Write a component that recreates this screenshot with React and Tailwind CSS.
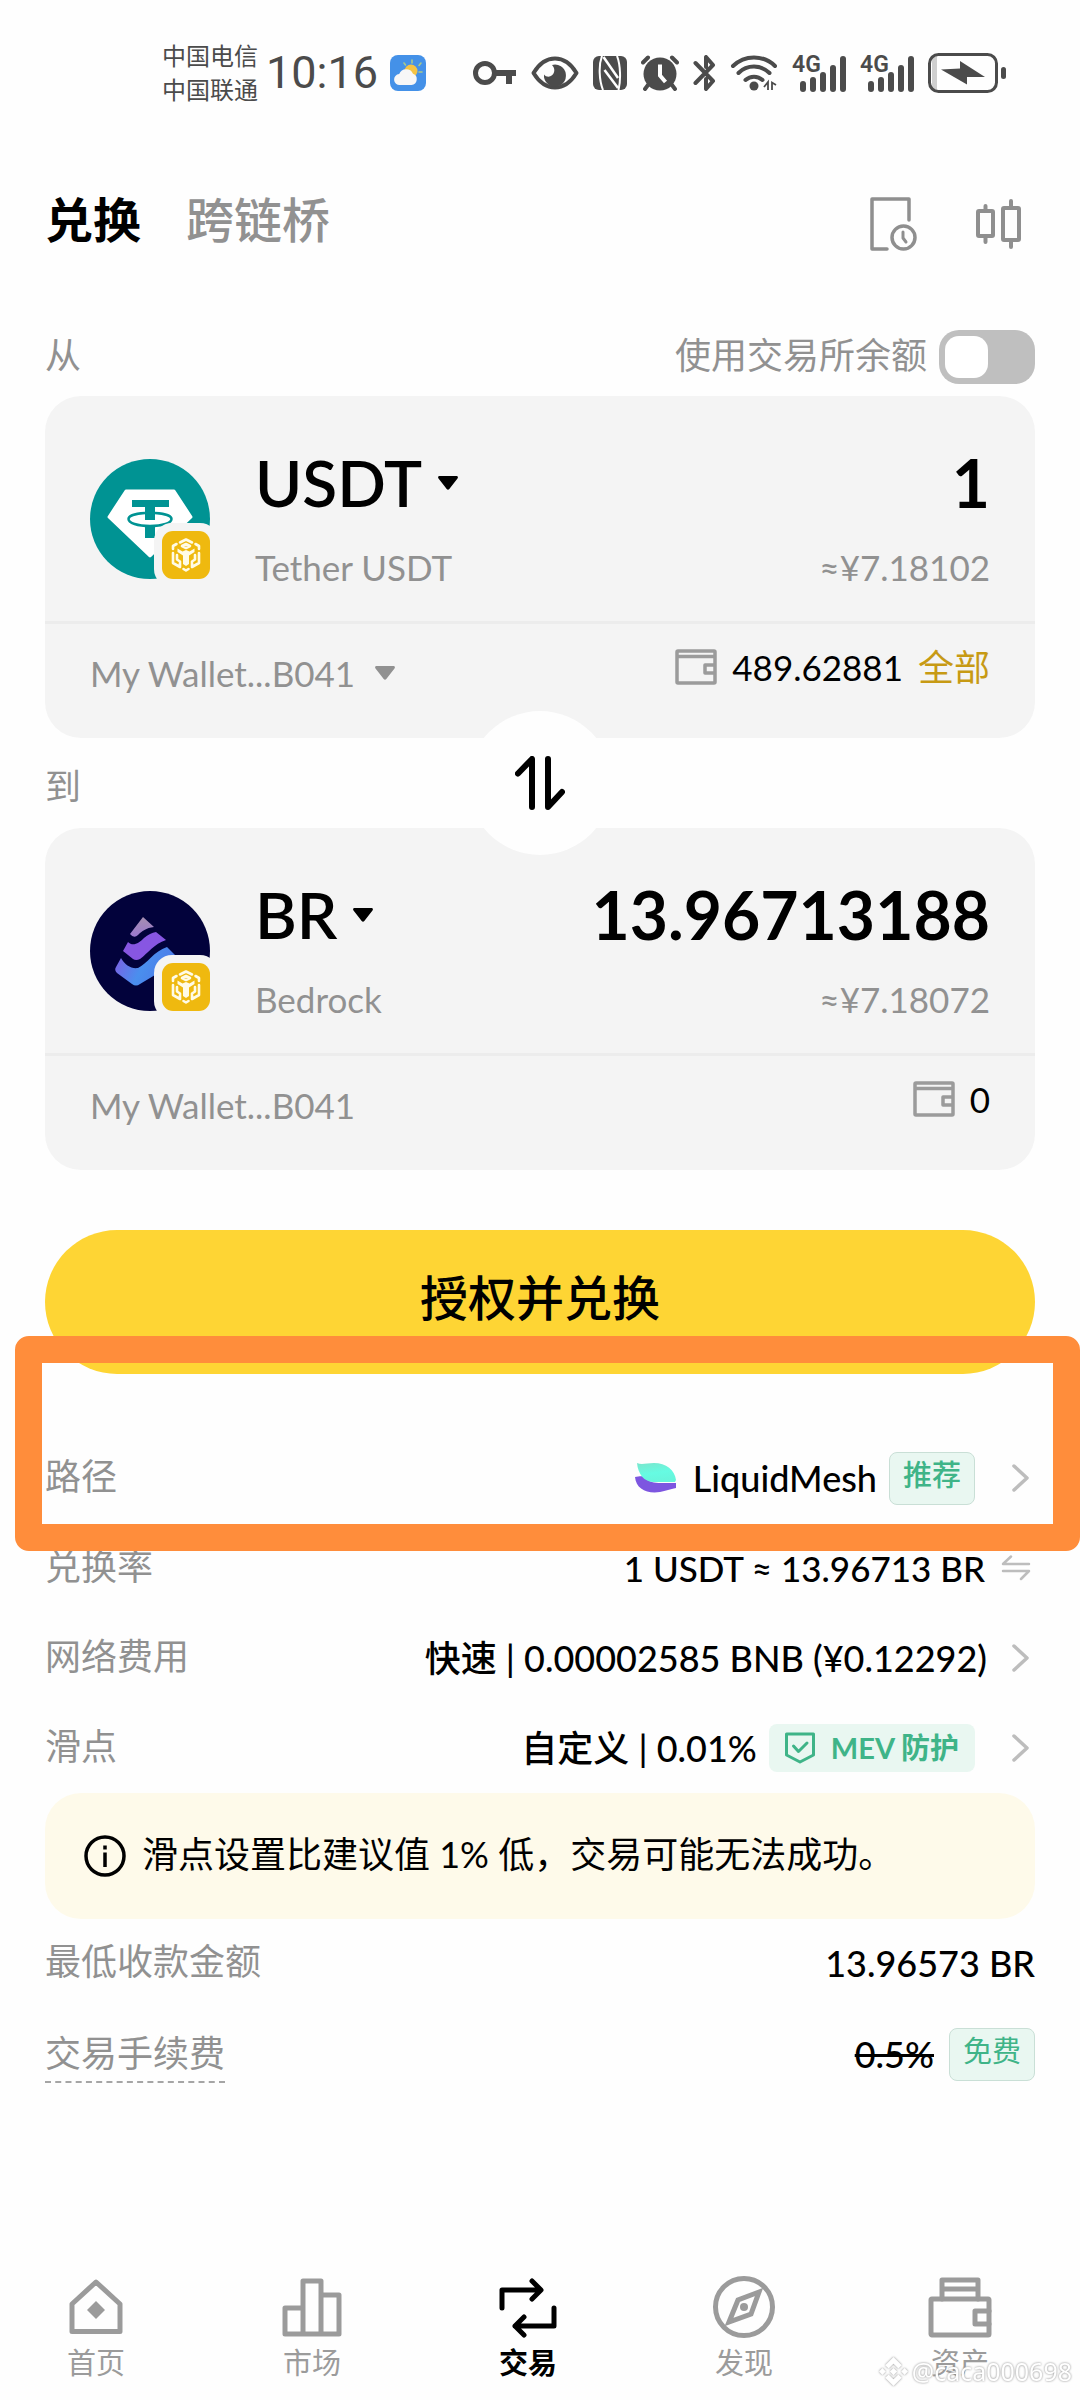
import React from "react";

const INK = "#4b4b4b";
const GRAY = "#9b9b9b";

/* ---------- status bar icons ---------- */

function WeatherIcon() {
  return (
    <svg width="36" height="36" viewBox="0 0 36 36" className="ml-3 shrink-0">
      <rect width="36" height="36" rx="8" fill="#4491e8" />
      <g stroke="#a9c98a" strokeWidth="1.6" strokeLinecap="round">
        <path d="M22 5v3M14 8l1.500 2M31 8l-2 2.500M29 17h3" />
      </g>
      <circle cx="21" cy="16" r="6.500" fill="#f4c445" />
      <path d="M10 30a5.500 5.500 0 0 1-.8-11 7.500 7.500 0 0 1 13.800-.2A5.800 5.800 0 0 1 21.500 30Z" fill="#f7f7f7" />
    </svg>
  );
}

function KeyIcon() {
  return (
    <svg width="44" height="26" viewBox="0 0 44 26" fill="none" stroke={INK}>
      <circle cx="12" cy="13" r="9.500" strokeWidth="5" />
      <path d="M22 13h21" strokeWidth="6" />
      <path d="M36 13v11" strokeWidth="6" />
    </svg>
  );
}

function EyeIcon() {
  return (
    <svg width="48" height="34" viewBox="0 0 48 34">
      <path d="M2.500 17C8 8 15 2.500 24 2.500S40 8 45.500 17C40 26 33 31.500 24 31.500S8 26 2.500 17Z" fill="none" stroke={INK} strokeWidth="4" strokeLinejoin="round" />
      <path d="M21 9a11 11 0 1 1-8 9.500c2 2.500 5.500 3 8 .8 3.200-2.800 3-7.500 0-10.300Z" fill={INK} />
    </svg>
  );
}

function NfcIcon() {
  return (
    <svg width="34" height="34" viewBox="0 0 34 34">
      <rect width="34" height="34" rx="6" fill={INK} />
      <g fill="none" stroke="#fff" strokeWidth="2">
        <path d="M9 0C5.500 9 6 24 10 34" />
        <path d="M24 0c3.500 9 4 24 1.500 34" />
        <path d="M10.500 1 25 22" strokeWidth="2.500" />
        <path d="M11.500 14 25 32" strokeWidth="2.500" />
      </g>
    </svg>
  );
}

function AlarmIcon() {
  return (
    <svg width="38" height="36" viewBox="1 0 38 36" fill="none" stroke={INK} strokeLinecap="round">
      <circle cx="20" cy="19" r="16.500" fill={INK} stroke="none" />
      <path d="M3 7.500 8 2.500M37 7.500 32 2.500M8 30l-3 4M32 30l3 4" strokeWidth="4" />
      <path d="M20 9.500v11l5.500 6.500" stroke="#fff" strokeWidth="4" strokeLinecap="butt" />
    </svg>
  );
}

function BluetoothIcon() {
  return (
    <svg width="23" height="36" viewBox="0 0 23 36" fill="none" stroke={INK} strokeWidth="4" strokeLinejoin="round" strokeLinecap="round">
      <path d="M2.500 8 20 26l-7 8V24M2.500 28 20 10l-7-8v10" />
    </svg>
  );
}

function WifiIcon() {
  return (
    <svg width="48" height="36" viewBox="0 0 48 36" fill="none" stroke={INK} strokeWidth="4" strokeLinecap="round">
      <path d="M3 11a30 30 0 0 1 42 0" />
      <path d="M8.500 18a22 22 0 0 1 31 0" />
      <path d="M15.500 25a12.500 12.500 0 0 1 17 0" />
      <circle cx="24" cy="31" r="4.500" fill={INK} stroke="none" />
      <path d="m34 32 4-5v8M42 35v-7.500l4 2.500" strokeWidth="1.800" strokeLinecap="butt" />
    </svg>
  );
}

function SignalIcon() {
  return (
    <div className="relative">
      <span className="absolute -top-1 left-0 font-['Roboto',sans-serif] text-[23px] leading-[28px] font-semibold">4G</span>
      <svg width="54" height="37" viewBox="0 0 54 37" fill={INK} className="block">
        <rect x="8" y="26" width="6" height="11" rx="3" />
        <rect x="18" y="22" width="6" height="15" rx="3" />
        <rect x="28" y="17" width="6" height="20" rx="3" />
        <rect x="38" y="10" width="6" height="27" rx="3" />
        <rect x="48" y="1" width="6" height="36" rx="3" />
      </svg>
    </div>
  );
}

function BatteryIcon() {
  return (
    <svg width="78" height="40" viewBox="0 0 78 40">
      <path d="M4 8a6 6 0 0 1 5-5v34a6 6 0 0 1-5-5Z" fill="#cfcfcf" />
      <rect x="1.500" y="1.500" width="67" height="37" rx="9" fill="none" stroke={INK} strokeWidth="3" />
      <path d="M13 16.500 32 15.500V8l25 16H39v7.500Z" fill={INK} />
      <rect x="73" y="14" width="5" height="12" rx="2.500" fill={INK} />
    </svg>
  );
}

/* ---------- interface icons ---------- */

function HistoryIcon() {
  return (
    <svg width="48" height="54" viewBox="0 0 48 54" fill="none" stroke="#8f8f8f" strokeWidth="3.500" strokeLinecap="round" strokeLinejoin="round">
      <path d="M39 23V2H2v50h15" />
      <circle cx="33.500" cy="40.500" r="11.500" />
      <path d="M33 35v6l3 4" strokeWidth="3" />
    </svg>
  );
}

function CandlesIcon() {
  return (
    <svg width="48" height="50" viewBox="0 0 48 50" fill="none" stroke="#8f8f8f" strokeWidth="4" strokeLinecap="round" strokeLinejoin="round">
      <rect x="3" y="12" width="15" height="25" rx="1" />
      <path d="M10.500 7v5M10.500 37v6" />
      <rect x="28" y="9" width="16" height="32" rx="1" />
      <path d="M36 2v7M36 41v7" />
    </svg>
  );
}

function Caret({ className }) {
  return (
    <svg width="20" height="14" viewBox="0 0 20 14" className={className} fill="currentColor">
      <path d="M1.500 0h17c1.300 0 1.900 1.400 1 2.400l-8.200 10.700c-.7.900-1.900.9-2.600 0L.5 2.400C-.4 1.400.2 0 1.500 0Z" />
    </svg>
  );
}

function WalletIcon() {
  return (
    <svg width="42" height="36" viewBox="0 0 42 36" fill="none" stroke={GRAY} strokeWidth="3.500" strokeLinejoin="round">
      <rect x="2" y="2" width="38" height="32" rx="1" />
      <path d="M2 7.500h38M39 16h-9v8h9" />
    </svg>
  );
}

function Chevron() {
  return (
    <svg width="18" height="28" viewBox="0 0 18 28" fill="none" stroke="#bdbdbd" strokeWidth="3.500" strokeLinecap="round" strokeLinejoin="round">
      <path d="m3 2 13 12L3 26" />
    </svg>
  );
}

function ChainBadge() {
  return (
    <span className="absolute -right-2 -bottom-2 rounded-[18px] bg-[#f4f4f4] p-2">
      <svg width="48" height="48" viewBox="0 0 48 48" className="block">
        <rect width="48" height="48" rx="11" fill="#efb90f" />
        <g fill="none" stroke="#fffbe6" strokeWidth="2.600" strokeLinejoin="round" strokeLinecap="round">
          <path d="M11 18v-3l3.500-2M18 11.500l6-3 6 3M33.500 13l3.500 2v3" />
          <path d="m20 15 4-2 4 2-4 2Z" />
          <path d="M11 22v10l7 4v-5.500l-3-2V24M37 22v10l-7 4v-5.500l3-2V24" />
          <path d="m21.500 38 2.500 1.500 2.500-1.500" />
        </g>
        <path d="m15.500 17.500 5 3 3.500-1.500 3.500 1.500 5-3V21l-5.500 3.500V33L24 35l-3-2v-8.500L15.500 21Z" fill="#fffbe6" />
      </svg>
    </span>
  );
}

function TetherLogo() {
  return (
    <svg width="120" height="120" viewBox="0 0 120 120">
      <circle cx="60" cy="60" r="60" fill="#009393" />
      <path d="M36 32h48l17 26-41 39L19 58Z" fill="#fff" stroke="#fff" strokeWidth="3" strokeLinejoin="round" />
      <g fill="#009393">
        <path d="M42 41h37v7H65v13H55V48H42Z" />
        <path d="M55 66h10v13H55Z" />
      </g>
      <path d="M55 54c-10 .6-16.500 3-16.500 6 0 4 9 7 21.500 7s21.500-3 21.500-7c0-3-6.500-5.400-16.500-6" fill="none" stroke="#009393" strokeWidth="2.500" />
    </svg>
  );
}

function BedrockLogo() {
  return (
    <svg width="120" height="120" viewBox="0 0 120 120">
      <defs>
        <linearGradient id="rock-top" x1="0" y1="0" x2="0" y2="1">
          <stop offset="0" stopColor="#a58fb0" />
          <stop offset="1" stopColor="#9a78cf" />
        </linearGradient>
        <linearGradient id="rock-base" x1="0" y1="0" x2="1" y2="0.300">
          <stop offset="0" stopColor="#8458e2" />
          <stop offset="0.550" stopColor="#4a8fee" />
          <stop offset="1" stopColor="#4c7be8" />
        </linearGradient>
      </defs>
      <circle cx="60" cy="60" r="60" fill="#02023b" />
      <path d="M53 26 64 36c-8 1-12 4-16 8q-4 4-8-1Z" fill="url(#rock-top)" />
      <path d="m66 41 10 8c-12 4-18 13-26 19q-4 2-7 0L33 60l5-9c5 5 11 1 16-4q6-5 12-6Z" fill="#8756e2" />
      <path d="m77 56 8 8v8L50 93q-4 3-8 0L27 82q-3-3-1-6l5-9c4 7 10 11 17 10C57 73 64 60 77 56Z" fill="url(#rock-base)" />
    </svg>
  );
}

function LiquidMeshLogo() {
  return (
    <svg width="42" height="32" viewBox="0 0 42 32">
      <defs>
        <linearGradient id="mesh-top" x1="0" y1="0" x2="0.300" y2="1">
          <stop offset="0" stopColor="#7be6cd" />
          <stop offset="0.600" stopColor="#66fbe2" />
          <stop offset="1" stopColor="#68f5dc" />
        </linearGradient>
      </defs>
      <path d="M0 15c4 0 7-2 10 1 4 4 9 5 16 5h15v5c-6 1-10 3-16 4C12 32 1 27 0 15Z" fill="#7d56e0" />
      <path d="M2 1c5 2 9 0 17 0 12 0 21 7 22 17l-1 2H19C9 20 3 12 2 1Z" fill="url(#mesh-top)" />
    </svg>
  );
}

function ShieldIcon() {
  return (
    <svg width="30" height="32" viewBox="0 0 30 32" fill="none" stroke="#3fb488" strokeWidth="3" strokeLinejoin="round" strokeLinecap="round">
      <path d="M1.500 2h27v21L15 30 1.500 23Z" />
      <path d="m8.500 14 5 5.500 8.500-8.500" />
    </svg>
  );
}

function InfoIcon() {
  return (
    <svg width="42" height="42" viewBox="0 0 42 42" fill="none" stroke="#000" strokeWidth="3.500">
      <circle cx="21" cy="21" r="19" />
      <path d="M21 17.500V32M21 10.500v4" />
    </svg>
  );
}

function FlipIcon() {
  return (
    <svg width="30" height="26" viewBox="0 0 30 26" fill="none" stroke="#bdbdbd" strokeWidth="2.500" strokeLinecap="round" strokeLinejoin="round">
      <path d="M28 9H2l8-7.500M2 16h26l-8 8" />
    </svg>
  );
}

const NAV_ICONS = {
  home: (
    <>
      <path d="M30 5 6 27v27.500h48V27Z" />
      <path d="m30 24 9 9-9 9-9-9Z" fill="currentColor" stroke="none" />
    </>
  ),
  market: <path d="M3 31h18v26H3ZM21 4h18v53H21ZM39 18h18v39H39Z" />,
  trade: <path d="M4 31V13h38M34 4l9 9-9 9M56 31v18H17M26 40l-9 9 9 9" />,
  discover: (
    <>
      <circle cx="30" cy="30" r="28.500" />
      <path d="M45 15 24 23l-9 22 22-8Z" strokeLinejoin="miter" />
      <circle cx="30" cy="30" r="4" fill="currentColor" stroke="none" />
    </>
  ),
  assets: (
    <>
      <rect x="1" y="22" width="58" height="36" rx="1" />
      <path d="M12 22V3h36v19M12 12h36M59 34H45v13h14" />
    </>
  ),
};

/* ---------- building blocks ---------- */

function TokenCard({ logo, symbol, name, amount, fiat, wallet, children }) {
  return (
    <section className="rounded-[36px] bg-[#f4f4f4]">
      <div className="flex h-[225px] items-center gap-[45px] px-[45px] pt-5">
        <span className="relative block shrink-0">
          {logo}
          <ChainBadge />
        </span>
        <div className="min-w-0 flex-1 pt-3">
          <div className="flex items-center justify-between">
            <button type="button" className="flex items-center gap-4 text-[64px] leading-[80px] font-semibold">
              {symbol}
              <Caret />
            </button>
            {amount}
          </div>
          <div className="mt-1 flex justify-between text-[35px] leading-[80px] text-[#919191]">
            <span>{name}</span>
            <span>{fiat}</span>
          </div>
        </div>
      </div>
      <div className="flex h-[117px] items-center justify-between border-t-[3px] border-[#ececec] px-[45px] pb-4 text-[35px]">
        {wallet}
        <div className="flex items-center gap-[15px] pb-3">{children}</div>
      </div>
    </section>
  );
}

function Row({ label, children, className = "h-[90px]", dashed = false }) {
  return (
    <div className={`flex items-center justify-between ${className}`}>
      <span className={dashed ? "border-b-2 border-dashed border-[#a5a5a5] text-[36px] leading-[56px] text-[#919191]" : "pb-1 text-[36px] leading-[54px] text-[#919191]"}>
        {label}
      </span>
      {children}
    </div>
  );
}

function Tag({ children }) {
  return (
    <span className="rounded-lg border border-[#c9dfd6] bg-[#e9f7f1] px-[13px] pb-2 text-[29px] leading-[43px] text-[#3fb488]">
      {children}
    </span>
  );
}

function NavItem({ icon, label, active = false }) {
  return (
    <a href={`#${icon}`} aria-current={active ? "page" : undefined} className={active ? "flex flex-col items-center text-black" : "flex flex-col items-center text-[#9b9b9b]"}>
      <svg width="60" height="60" viewBox="0 0 60 60" fill="none" stroke="currentColor" strokeWidth="5" strokeLinecap="round" strokeLinejoin="round" className="overflow-visible">
        {NAV_ICONS[icon]}
      </svg>
      <span className={active ? "mt-1 text-[29px] leading-[44px] font-bold" : "mt-1 text-[29px] leading-[44px]"}>{label}</span>
    </a>
  );
}

export default function App() {
  return (
    <div className="relative flex min-h-screen flex-col bg-[#fefefe] font-['Lato','Noto_Sans_CJK_SC',sans-serif] text-black">
      <div className="flex h-[146px] items-center justify-between pr-[74px] pl-[162px] text-[#4b4b4b]">
        <div className="flex items-center">
          <div className="text-[24px] leading-[34px]">
            <div>中国电信</div>
            <div>中国联通</div>
          </div>
          <span className="ml-2 font-['Roboto',sans-serif] text-[45px] leading-[60px]">10:16</span>
          <WeatherIcon />
        </div>
        <div className="flex items-center gap-[14px]">
          <KeyIcon />
          <EyeIcon />
          <NfcIcon />
          <AlarmIcon />
          <BluetoothIcon />
          <WifiIcon />
          <SignalIcon />
          <SignalIcon />
          <BatteryIcon />
        </div>
      </div>

      <main className="px-[45px]">
        <header className="flex h-[148px] items-center justify-between pr-[12px]">
          <div className="flex gap-[45px] text-[48px] leading-[72px]">
            <button type="button" className="font-bold">兑换</button>
            <button type="button" className="font-medium text-[#919191]">跨链桥</button>
          </div>
          <div className="flex items-center gap-[57px] pt-2">
            <button type="button" aria-label="历史记录"><HistoryIcon /></button>
            <button type="button" aria-label="行情"><CandlesIcon /></button>
          </div>
        </header>

        <div className="mt-9 mb-3 flex h-[54px] items-center justify-between text-[36px] leading-[54px] text-[#919191]">
          <span className="pb-1">从</span>
          <label className="flex items-center gap-3">
            <span className="pb-1">使用交易所余额</span>
            <input
              type="checkbox"
              role="switch"
              className="flex h-[54px] w-[96px] shrink-0 appearance-none items-center rounded-[20px] bg-[#bfbfbf] px-[6px] before:block before:h-[42px] before:w-[43px] before:rounded-[14px] before:bg-white"
            />
          </label>
        </div>

        <TokenCard
          logo={<TetherLogo />}
          symbol="USDT"
          name="Tether USDT"
          fiat="≈¥7.18102"
          amount={
            <input
              aria-label="兑换数量"
              defaultValue="1"
              className="w-[200px] min-w-0 bg-transparent text-right text-[66px] leading-[80px] font-bold outline-none"
            />
          }
          wallet={
            <button type="button" className="flex items-center gap-5 text-[#919191]">
              My Wallet...B041
              <Caret />
            </button>
          }
        >
          <WalletIcon />
          <span>489.62881</span>
          <button type="button" className="text-[36px] text-[#c79a14]">全部</button>
        </TokenCard>

        <div className="relative flex h-[90px] items-center">
          <span className="pt-1.5 text-[36px] leading-[54px] text-[#919191]">到</span>
          <button
            type="button"
            aria-label="互换"
            className="absolute top-1/2 left-1/2 flex size-36 -translate-x-1/2 -translate-y-1/2 items-center justify-center rounded-full bg-[#fefefe]"
          >
            <svg width="50" height="54" viewBox="0 0 50 54" fill="none" stroke="#000" strokeWidth="6" strokeLinecap="round" strokeLinejoin="round">
              <path d="M3 17.500 17 3v48M33 3v48l14-15" />
            </svg>
          </button>
        </div>

        <TokenCard
          logo={<BedrockLogo />}
          symbol="BR"
          name="Bedrock"
          fiat="≈¥7.18072"
          amount={<output className="text-[66px] leading-[80px] font-bold">13.96713188</output>}
          wallet={<span className="text-[#919191]">My Wallet...B041</span>}
        >
          <WalletIcon />
          <span>0</span>
        </TokenCard>

        <div className="relative mt-[60px]">
          <button type="button" className="block h-36 w-full rounded-full bg-[#fed534] pb-2 text-[48px] font-medium">
            授权并兑换
          </button>

          <div className="pt-[59px]">
            <Row label="路径">
              <button type="button" className="flex items-center pr-1.5 text-[36px] font-medium">
                <LiquidMeshLogo />
                <span className="ml-4">LiquidMesh</span>
                <span className="ml-3 flex"><Tag>推荐</Tag></span>
                <span className="ml-9"><Chevron /></span>
              </button>
            </Row>
          </div>
          <div className="pointer-events-none absolute top-[106px] -right-[45px] bottom-[-28px] -left-[30px] rounded-[14px] border-[27px] border-[#ff8d3b]" />
        </div>

        <Row label="兑换率">
          <button type="button" className="flex items-center gap-4 pr-1 text-[35px] font-medium">
            1 USDT ≈ 13.96713 BR
            <FlipIcon />
          </button>
        </Row>
        <Row label="网络费用">
          <button type="button" className="flex items-center pr-1.5 text-[36px] font-medium">
            快速 | 0.00002585 BNB (¥0.12292)
            <span className="ml-6"><Chevron /></span>
          </button>
        </Row>
        <Row label="滑点">
          <button type="button" className="flex items-center pr-1.5 text-[36px] font-medium">
            自定义 | 0.01%
            <span className="ml-3 flex items-center gap-4 rounded-lg bg-[#e9f7f1] px-4 text-[29px] leading-[48px] font-bold text-[#3fb488]">
              <ShieldIcon />
              MEV 防护
            </span>
            <span className="ml-9"><Chevron /></span>
          </button>
        </Row>

        <div role="alert" className="flex h-[126px] items-center gap-4 rounded-[36px] bg-[#fefaea] px-[39px] text-[36px] leading-[54px]">
          <InfoIcon />
          <span className="pb-1">滑点设置比建议值 1% 低，交易可能无法成功。</span>
        </div>

        <Row label="最低收款金额" className="h-[88px]">
          <span className="text-[36px] font-medium">13.96573 BR</span>
        </Row>
        <Row label="交易手续费" className="h-[94px]" dashed>
          <span className="flex items-center gap-[15px]">
            <s className="text-[36px] font-medium">0.5%</s>
            <Tag>免费</Tag>
          </span>
        </Row>
      </main>

      <nav className="mt-auto flex justify-between pr-[90px] pb-[15px] pl-[66px]">
        <NavItem icon="home" label="首页" />
        <NavItem icon="market" label="市场" />
        <NavItem icon="trade" label="交易" active />
        <NavItem icon="discover" label="发现" />
        <NavItem icon="assets" label="资产" />
      </nav>

      <div className="pointer-events-none absolute right-2 bottom-[11px] flex items-center gap-1 font-['Noto_Sans',sans-serif] text-[25px] leading-[36px] text-white [filter:drop-shadow(0_0_1px_#8a8a8a)]">
        <svg width="29" height="29" viewBox="0 0 28 28" fill="#fff">
          <path d="m14 0 8 8-3.300 3.200L14 6.500l-4.700 4.700L6 8ZM3.300 10.700 6.600 14l-3.300 3.300L0 14ZM14 10.500l3.500 3.500-3.500 3.500-3.500-3.500ZM24.700 10.700 28 14l-3.300 3.300-3.300-3.300ZM9.300 16.800l4.700 4.700 4.700-4.700L22 20l-8 8-8-8Z" />
        </svg>
        @caca000698
      </div>
    </div>
  );
}
